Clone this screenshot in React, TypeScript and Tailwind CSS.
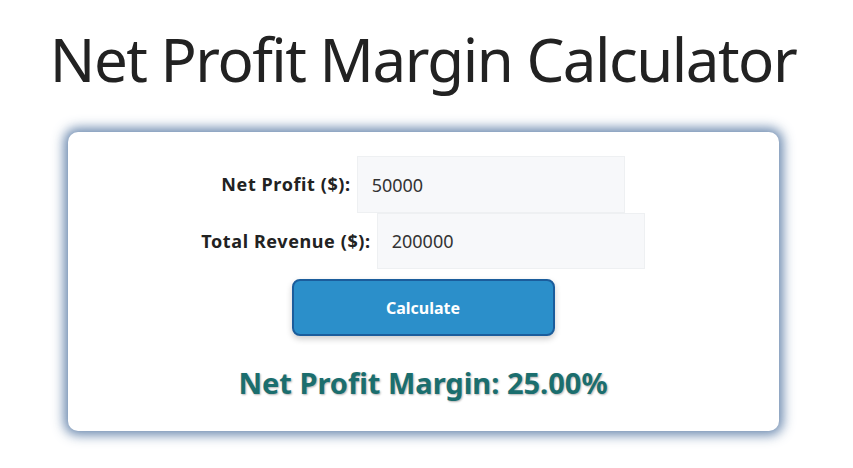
export default function App() {
  return (
    <div className="w-[846px] bg-white pb-8" style={{ fontFamily: '"Noto Sans", "Open Sans", sans-serif' }}>
      <h1 className="pt-[17px] text-center text-[60px] leading-[84px] font-normal text-[#222] tracking-[-1.5px]">
        Net Profit Margin Calculator
      </h1>
      <div className="mx-auto mt-[31px] w-[711px] rounded-[10px] bg-white shadow-[0_0_12px_4px_rgba(80,115,160,0.85)] pt-6 pb-[28px]">
        <div className="flex flex-col items-center">
          <div className="flex items-center">
            <label className="mr-[6px] text-[18px] font-bold text-[#222] tracking-[0.6px]">Net Profit ($):</label>
            <input
              className="h-[57px] w-[268px] border border-[#eef0f2] bg-[#f7f8fa] px-[14px] text-[18px] text-[#333] outline-none"
              defaultValue="50000"
            />
          </div>
          <div className="flex items-center">
            <label className="mr-[6px] text-[18px] font-bold text-[#222] tracking-[0.6px]">Total Revenue ($):</label>
            <input
              className="h-[56px] w-[268px] border border-[#eef0f2] bg-[#f7f8fa] px-[14px] text-[18px] text-[#333] outline-none"
              defaultValue="200000"
            />
          </div>
          <button className="mt-[10px] h-[57px] w-[263px] rounded-[8px] border-2 border-[#1b5d9c] bg-[#2b8fca] text-[16px] font-bold text-white shadow-[0_3px_6px_rgba(0,0,0,0.2)]">
            Calculate
          </button>
          <div className="mt-[27px] text-[29px] leading-[40px] font-bold text-[#1b6e6e] [text-shadow:1px_1px_2px_rgba(0,0,0,0.3)]">
            Net Profit Margin: 25.00%
          </div>
        </div>
      </div>
    </div>
  );
}
